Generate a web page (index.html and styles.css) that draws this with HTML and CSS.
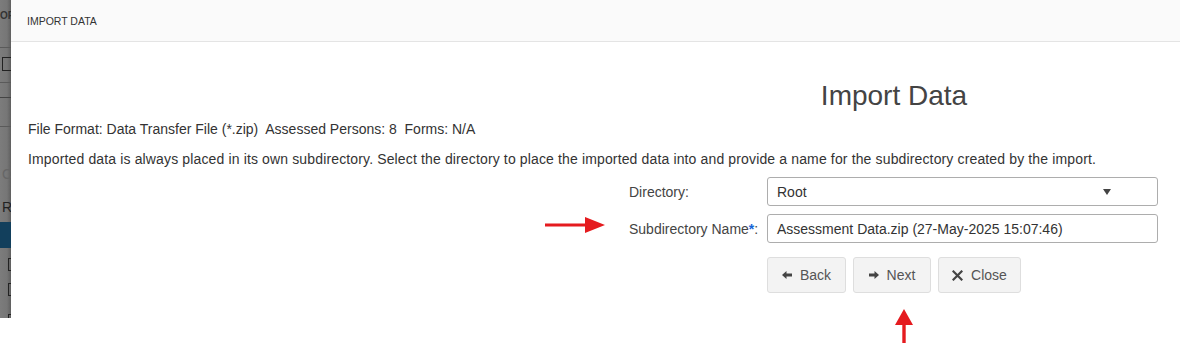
FILE: index.html
```html
<!DOCTYPE html>
<html lang="en">
<head>
<meta charset="utf-8">
<title>Import Data</title>
<link rel="stylesheet" href="styles.css">
</head>
<body>
<div class="screen">
  <div class="backdrop">
    <div class="bd-head">OF</div>
    <div class="bd-line bd-l1"></div>
    <div class="bd-check"></div>
    <div class="bd-line bd-l2"></div>
    <div class="bd-line bd-l3"></div>
    <div class="bd-line bd-l4"></div>
    <div class="bd-letter bd-c">C</div>
    <div class="bd-letter bd-r">R</div>
    <div class="bd-sel"></div>
    <div class="bd-box bd-b1"></div>
    <div class="bd-box bd-b2"></div>
    <div class="bd-box bd-b3"></div>
  </div>
  <div class="modal">
    <div class="modal-header">IMPORT DATA</div>
    <div class="modal-body">
      <div class="title-row">
        <div></div>
        <h1 class="title">Import Data</h1>
      </div>
      <p class="info">File Format: Data Transfer File (*.zip)&nbsp; Assessed Persons: 8&nbsp; Forms: N/A</p>
      <p class="desc">Imported data is always placed in its own subdirectory. Select the directory to place the imported data into and provide a name for the subdirectory created by the import.</p>
      <div class="form">
        <label class="lbl">Directory:</label>
        <div class="select">
          <span>Root</span>
          <svg class="caret" width="8" height="6" viewBox="0 0 8 6"><path d="M0 0H8L4 6Z" fill="#444"/></svg>
        </div>
        <label class="lbl">Subdirectory Name<span class="req">*</span>:</label>
        <div class="input">Assessment Data.zip (27-May-2025 15:07:46)</div>
        <div></div>
        <div class="buttons">
          <button class="btn btn-back"><svg width="10" height="8" viewBox="0 0 10 8"><path d="M0 4L4.5 0V2.6H10V5.4H4.5V8Z" fill="#444"/></svg>Back</button>
          <button class="btn btn-next"><svg width="10" height="8" viewBox="0 0 10 8"><path d="M10 4L5.5 0V2.6H0V5.4H5.5V8Z" fill="#444"/></svg>Next</button>
          <button class="btn btn-close"><svg width="11" height="11" viewBox="0 0 11 11"><path d="M1.5 1.5L9.5 9.5M9.5 1.5L1.5 9.5" stroke="#444" stroke-width="2.2" stroke-linecap="square"/></svg>Close</button>
        </div>
      </div>
    </div>
  </div>
  <svg class="arrow arrow-h" width="62" height="20" viewBox="0 0 62 20"><path d="M0 8.5H42V11.5H0Z" fill="#e51b1f"/><path d="M40 2L60 10L40 18Z" fill="#e51b1f"/></svg>
  <svg class="arrow arrow-v" width="22" height="36" viewBox="0 0 22 36"><path d="M11 0L20 16H2Z" fill="#e51b1f"/><path d="M9.3 15H12.7V36H9.3Z" fill="#e51b1f"/></svg>
</div>
</body>
</html>
```

FILE: styles.css
```css
* { box-sizing: border-box; }
html, body { margin: 0; padding: 0; background: #fff; }
body {
  font-family: "Liberation Sans", Arial, sans-serif;
  font-size: 14px;
  color: #333;
}
.screen {
  position: relative;
  display: flex;
  width: 1180px;
  height: 343px;
  overflow: hidden;
}
.backdrop {
  position: relative;
  width: 11px;
  height: 318px;
  flex: none;
  background: linear-gradient(to right, #7c7c7c 0, #767676 7px, #5f5f5f 11px);
  overflow: hidden;
}
.bd-head {
  position: absolute; left: 0; top: 10px; width: 11px; overflow: hidden;
  font-size: 10px; font-weight: bold; color: #333; white-space: nowrap;
}
.bd-line { position: absolute; left: 0; width: 11px; height: 1px; background: #5a5a5a; }
.bd-l1 { top: 47px; }
.bd-l2 { top: 82px; }
.bd-l3 { top: 97px; background: #444; }
.bd-l4 { top: 126px; }
.bd-check { position: absolute; left: 2px; top: 57px; width: 12px; height: 14px; border: 1px solid #222; }
.bd-letter { position: absolute; left: 2px; font-size: 14px; }
.bd-c { top: 166px; color: #666; }
.bd-r { top: 199px; color: #222; }
.bd-sel { position: absolute; left: 0; top: 222px; width: 11px; height: 26px; background: #123f5c; }
.bd-box { position: absolute; left: 8px; width: 8px; height: 13px; border: 1px solid #222; }
.bd-b1 { top: 258px; }
.bd-b2 { top: 283px; }
.bd-b3 { top: 314px; }

.modal { flex: 1; min-width: 0; background: #fff; }
.modal-header {
  height: 42px;
  background: #fafafa;
  border-bottom: 1px solid #e4e4e4;
  display: flex;
  align-items: center;
  padding-left: 16px;
  font-size: 10.5px;
  color: #333;
}
.modal-body { padding: 37px 17px 0 17px; }
.title-row { display: grid; grid-template-columns: 597px 1fr; }
.title {
  margin: 0;
  text-align: center;
  font-size: 28px;
  line-height: 34px;
  font-weight: normal;
  color: #444;
}
.info { margin: 6px 0 0; line-height: 20px; }
.desc { margin: 10px 0 0; line-height: 20px; white-space: nowrap; letter-spacing: 0.01em; }
.form {
  margin: 8px 0 0 601px;
  display: grid;
  grid-template-columns: 138px 391px;
  grid-auto-rows: auto;
  row-gap: 8px;
  align-items: center;
}
.lbl { color: #444; white-space: nowrap; }
.req { color: #1565d8; font-weight: bold; }
.select, .input {
  height: 29px;
  border: 1px solid #adadad;
  border-radius: 3px;
  padding: 0 9px;
  display: flex;
  align-items: center;
  color: #333;
}
.select { justify-content: space-between; padding-right: 46px; }
.buttons { display: flex; gap: 7px; margin-top: 6px; }
.btn {
  height: 36px;
  background: #f3f3f3;
  border: 1px solid #dedede;
  border-radius: 3px;
  font: inherit;
  color: #555;
  display: flex;
  align-items: center;
  justify-content: center;
  gap: 8px;
  padding: 0;
}
.btn-back { width: 79px; }
.btn-next { width: 78px; }
.btn-close { width: 83px; }
.arrow { position: absolute; }
.arrow-h { left: 545px; top: 215px; }
.arrow-v { left: 893px; top: 309px; }
```
